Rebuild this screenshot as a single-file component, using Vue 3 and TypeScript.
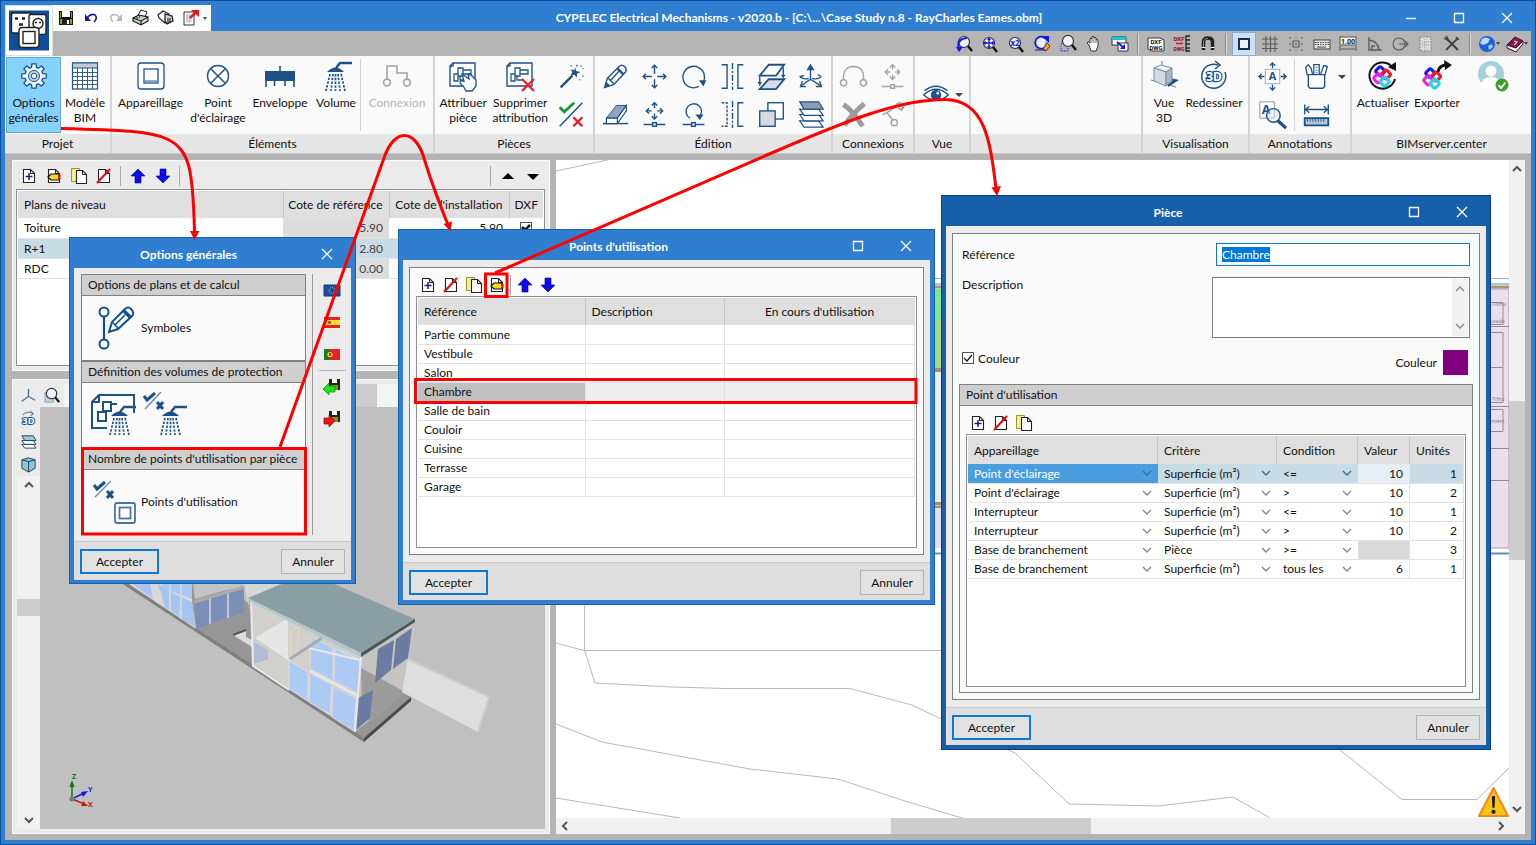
<script setup lang="ts">
import { onMounted, ref } from 'vue'

const N = '#1d5288'
const L = `fill="none" stroke="${N}" stroke-width="1.5"`
const G = 'fill="none" stroke="#a3a3a3" stroke-width="1.6"'
const D = 'fill="none" stroke="#5c5c5c" stroke-width="1.1"'

function gearPath(): string {
  const points: string[] = []
  for (let i = 0; i < 8; i++) {
    const base = (i * Math.PI) / 4
    const steps: [number, number][] = [[-0.27, 9], [-0.17, 12.4], [0.17, 12.4], [0.27, 9]]
    for (const [da, r] of steps) {
      points.push(`${(16 + r * Math.sin(base + da)).toFixed(1)} ${(16 - r * Math.cos(base + da)).toFixed(1)}`)
    }
  }
  return `M${points.join('L')}Z`
}

const moveArrows = (s: string, cy: number, r: number) =>
  `<g fill="none" stroke="${s}" stroke-width="1.6"><path d="M16 ${cy - 3}V${cy - r}M16 ${cy + 3}V${cy + r}M13 ${cy}H${16 - r}M19 ${cy}H${16 + r}"/><path d="M13 ${cy - r + 3}L16 ${cy - r}L19 ${cy - r + 3}M13 ${cy + r - 3}L16 ${cy + r}L19 ${cy + r - 3}M${19 - r} ${cy - 3}L${16 - r} ${cy}L${19 - r} ${cy + 3}M${13 + r} ${cy - 3}L${16 + r} ${cy}L${13 + r} ${cy + 3}"/></g>`
const baseNode = (s: string) =>
  `<g fill="none" stroke="${s}" stroke-width="1.6"><path d="M4 27H14M18 27H28"/><rect x="14" y="25" width="4" height="4"/></g>`
const spray = (x: number, y: number) =>
  `<path d="M${x + 10} ${y + 5}L${x + 14} ${y}H${x + 26}" fill="none" stroke="${N}" stroke-width="2.4"/><path d="M${x + 1} ${y + 9}Q${x + 9.5} ${y} ${x + 18} ${y + 9}Z" fill="${N}"/><path d="M${x + 4} ${y + 11}L${x} ${y + 28}M${x + 7} ${y + 11}L${x + 5} ${y + 28}M${x + 9.5} ${y + 11}V${y + 28}M${x + 12} ${y + 11}L${x + 14} ${y + 28}M${x + 15} ${y + 11}L${x + 19} ${y + 28}" stroke="${N}" stroke-width="1.7" stroke-dasharray="2.4 1.4" fill="none"/>`
const lens = (x: number, y: number) =>
  `<circle cx="${x}" cy="${y}" r="5.500" fill="#eef3fb" stroke="#333" stroke-width="1.2"/><path d="M${x + 4} ${y + 4}L${x + 8} ${y + 9}" stroke="#111" stroke-width="2.4"/>`
const planBase = (s: string) =>
  `<path d="M6 3H28V26H3V6Z" fill="#fff" stroke="${s}" stroke-width="1.4"/><path d="M3 6H6V3M11 8H16V16H11ZM7 14H11V21H7ZM16 10H24V14H16M13 16V20H20" fill="none" stroke="${s}" stroke-width="1.3"/>`
const bimLogo =
  '<g fill="none" stroke-width="2.4" transform="translate(-4.600 -2.800) scale(1.300)"><rect x="11" y="8" width="5.500" height="5.500" rx="1.500" transform="rotate(45 13.700 10.700)" stroke="#1a1af0"/><rect x="15.500" y="10.500" width="5.500" height="5.500" rx="1.500" transform="rotate(45 18.200 13.200)" stroke="#ee1c2a"/><rect x="9.500" y="13.500" width="5.500" height="5.500" rx="1.500" transform="rotate(45 12.200 16.200)" stroke="#f21ee8"/><rect x="14.500" y="16" width="5.500" height="5.500" rx="1.500" transform="rotate(45 17.200 18.700)" stroke="#25d6e6"/></g>'
const disk = (x: number, y: number) =>
  `<path d="M${x} ${y}H${x + 11}V${y + 11}H${x}Z" fill="#26260a"/><path d="M${x + 3} ${y}H${x + 8}V${y + 4}H${x + 3}Z" fill="#fff"/><path d="M${x + 2} ${y + 6}H${x + 9}V${y + 11}H${x + 2}Z" fill="#8b8b28"/>`
const pageShape = '<path d="M3.500 2.500H10.500L14.500 6.500V15.500H3.500Z" fill="#fff" stroke="#222" stroke-width="1.100"/><path d="M10.500 2.500V6.500H14.500" fill="none" stroke="#222"/>'

const icons: Record<string, string> = {
  gear: `<path d="${gearPath()}" fill="#eef6fc" stroke="${N}" stroke-width="1.3" stroke-linejoin="round"/><circle cx="16" cy="16" r="5.500" fill="#b9ddf5" stroke="${N}"/><circle cx="16" cy="16" r="2.800" fill="#eef6fc" stroke="${N}"/>`,
  grid: `<rect x="3.500" y="3" width="25" height="26" fill="#fff" stroke="${N}" stroke-width="1.2"/><rect x="3.500" y="3" width="25" height="5" fill="#c3cad6" stroke="${N}"/><path d="M4 12.500H28M4 16.500H28M4 20.500H28M4 24.500H28M8.500 8V29M13.500 8V29M18.500 8V29M23.500 8V29" fill="none" stroke="${N}" stroke-width=".9"/>`,
  socket: `<rect x="3" y="3" width="26" height="26" rx="3" fill="#fff" stroke="${N}" stroke-width="1.3"/><rect x="9" y="9" width="14" height="14" fill="#fff" stroke="${N}" stroke-width="1.3"/><path d="M10 21H22" stroke="${N}" stroke-width="1"/>`,
  lamp: `<circle cx="16" cy="16" r="10.500" fill="#fff" stroke="${N}" stroke-width="1.400"/><path d="M8.500 8.500L23.500 23.500M23.500 8.500L8.500 23.500" ${L}/>`,
  enveloppe: `<path d="M1 11H31V21H1Z" fill="${N}"/><path d="M16 6V11M2 20V27M10.500 20V26M21 20V26M30 20V27" stroke="${N}" stroke-width="1.6"/>`,
  shower: spray(6, 3),
  connexion: `<path d="M6 20V6H16V13H26V20" ${G}/><circle cx="6" cy="22.500" r="3.400" ${G}/><circle cx="26" cy="22.500" r="3.400" ${G}/>`,
  planHand: planBase(N) + `<path d="M15 14L22 19L21 14Q24 14 26 17L29 20V26L25 31H19Q17 26 13 23Q13 20 17 21Z" fill="#fff" stroke="${N}" stroke-width="1.3"/>`,
  planX: planBase(N) + '<path d="M18 19L30 31M30 19L18 31" stroke="#e8202c" stroke-width="2.3"/>',
  wand: `<path d="M4 28L17 15" stroke="${N}" stroke-width="2.6"/><path d="M20 6L21 10L26 11L22 13L22 17L19 14L15 15L17 11L15 8L19 9Z" fill="${N}"/><path d="M22 3V5M28 7H29M28 15L29 16M26 4L27 5M15 4L16 5M25 19V20" stroke="${N}" stroke-width="1.4"/>`,
  checkX: `<path d="M3 29L28 3" stroke="${N}" stroke-width="1.6"/><path d="M3 8L8 13L19 3" fill="none" stroke="#119a35" stroke-width="3"/><path d="M18 19L28 29M28 19L18 29" stroke="#e01b2b" stroke-width="2.6"/>`,
  pencil: `<path d="M4 28L7 18L20 5Q23 2 26 5Q29 8 27 11L14 25Z" fill="#fff" stroke="${N}" stroke-width="1.6"/><path d="M4 28L6 22L10 26Z" fill="${N}"/><path d="M18 7L25 14" stroke="${N}" stroke-width="2.6"/><path d="M10 21L20 10M8 18L14 24" ${L}/>`,
  move: moveArrows(N, 16, 12.5),
  rotate: `<path d="M22 27Q16 30 10 27A12 12 0 1 1 27 22" ${L}/><path d="M22 20H30L27 27Z" fill="${N}"/>`,
  mirror: `<path d="M4 3H10V29H4M28 3H22V29H28" ${L}/><path d="M16 1V31" ${L} stroke-dasharray="7 2 2 2"/>`,
  copyPlane: `<path d="M3 15L13 3H30L21 15Z" fill="#fff" stroke="${N}" stroke-width="2"/><path d="M3 30L13 19H30L21 30Z" fill="#d5dae3" stroke="${N}" stroke-width="2"/><path d="M29 6V17M3 16V26" ${L}/><path d="M26.500 14H31.500L29 18ZM.500 22H5.500L3 26Z" fill="${N}"/>`,
  axes3: `<path d="M16 19V6M16 19L6 26M16 19L27 26" ${L}/><path d="M11.500 9L16 2L20.500 9Z" fill="${N}"/><path d="M11 27L5 27L7 21M22 27L28 27L26 21M4 16L9 15M4 16Q9 20 14 18M28 16Q23 20 18 18M28 16L24 14" ${L}/>`,
  eraser: `<path d="M2 26H30" stroke="${N}" stroke-width="1.6"/><path d="M6 20L17 6H28L18 20Z" fill="#8ea4bf" stroke="${N}"/><path d="M6 20H18V26H6ZM18 20L28 6V12L18 26" fill="#fff" stroke="${N}" stroke-width="1.3"/>`,
  moveBase: moveArrows(N, 12, 9) + baseNode(N),
  rotateBase: `<path d="M12 20A8.500 8.500 0 1 1 22 19" ${L}/><path d="M18 16H27L23 22Z" fill="${N}"/>` + baseNode(N),
  mirrorCopy: `<path d="M4 3H10V29H4" ${L} stroke-dasharray="3 1.500"/><path d="M28 3H22V29H28" ${L}/><path d="M16 1V31" ${L} stroke-dasharray="7 2 2 2"/>`,
  copies: `<rect x="12" y="3" width="17" height="18" fill="#fff" stroke="${N}" stroke-width="1.500"/><rect x="3" y="12" width="17" height="17" fill="#d5dae3" stroke="${N}" stroke-width="1.500"/>`,
  layers: `<g stroke="${N}" stroke-width="1.300" fill="#fff"><path d="M4 23L9 30H30L25 23Z"/><path d="M4 16L9 23H30L25 16Z"/><path d="M4 10L9 17H30L25 10Z"/><path d="M4 2L9 10H30L25 2Z" fill="#8c9db4"/></g>`,
  arcG: `<path d="M5 20Q4 5 16 5Q28 5 27 20" ${G}/><circle cx="5" cy="23" r="3.400" ${G}/><circle cx="27" cy="23" r="3.400" ${G}/>`,
  moveG: moveArrows('#a3a3a3', 11, 8) + baseNode('#a3a3a3'),
  crossG: '<path d="M5 5Q16 12 26 29M28 4Q14 16 6 28" stroke="#9c9c9c" stroke-width="5.500" fill="none"/>',
  nodeG: `<path d="M5 16L10 14L17 23M10 14L22 6" ${G}/><circle cx="18" cy="25" r="3.400" ${G}/><path d="M20 5Q24 1 27 5Q28 8 26 10M22 9L26 11L29 7" ${G}/>`,
  eye: `<path d="M2 16Q16 3 30 16Q16 28 2 16Z" fill="#fff" stroke="${N}" stroke-width="1.6"/><circle cx="16" cy="16" r="6" fill="${N}"/><circle cx="18" cy="14" r="1.600" fill="#fff"/><path d="M3 11Q16 1 29 11" ${L}/>`,
  cube: `<path d="M14 1V8M3 20L28 27" stroke="#6b7b90"/><path d="M18 17L31 20L20 27Z" fill="${N}"/><path d="M6 8L13 5L24 8L18 12Z" fill="#eef1f5" stroke="#7d8ca0"/><path d="M6 8L18 12V26L6 21Z" fill="#d3dae4" stroke="#7d8ca0"/><path d="M18 12L24 8V21L18 26Z" fill="#aab6c6" stroke="#7d8ca0"/>`,
  redraw: `<path d="M20 5A12 12 0 1 0 27 12M17 1L22 5L17 9" ${L}/><text x="16" y="21" text-anchor="middle" font-family="Open Sans, sans-serif" font-size="12" font-weight="700" fill="#fff" stroke="${N}" stroke-width="2.4" paint-order="stroke">3D</text>`,
  annoMove: `<rect x="8" y="8" width="16" height="16" fill="#fff" stroke="#8ba5c4"/><path d="M16 7V1M16 25V31M7 16H1M25 16H31M13 4L16 1L19 4M13 28L16 31L19 28M4 13L1 16L4 19M28 13L31 16L28 19" ${L}/><text x="16" y="20" text-anchor="middle" font-family="Open Sans, sans-serif" font-size="12" font-weight="700" fill="${N}">A</text>`,
  annoFind: `<path d="M2 2H18V20H2Z" fill="#fff" stroke="#6d8db3"/><text x="9" y="15" text-anchor="middle" font-family="Open Sans, sans-serif" font-size="14" font-weight="700" fill="${N}">A</text><circle cx="17" cy="17" r="7.500" fill="#dfe7f0" fill-opacity=".5" stroke="${N}" stroke-width="1.6"/><path d="M22 23L31 31" stroke="${N}" stroke-width="3.600"/>`,
  penCup: `<path d="M6 15L4 6L7 3L10 7L12 15M13 15V3H19V15M20 15L24 4L28 5L25 15" fill="#fff" stroke="${N}" stroke-width="1.400"/><path d="M7 14H25V27L23 29H9L7 27Z" fill="#fff" stroke="${N}" stroke-width="1.500"/><path d="M15 6H17M15 9H17M15 12H17" stroke="${N}"/>`,
  ruler: `<path d="M3 5V16M29 5V16M4 10.500H28M8 7L4 10.500L8 14M24 7L28 10.500L24 14" ${L}/><rect x="3" y="20" width="26" height="8" fill="#b9c6d8" stroke="${N}" stroke-width="2"/><path d="M6 21V24M9 21V24M12 21V24M15 21V24M18 21V24M21 21V24M24 21V24" stroke="${N}"/>`,
  bimSync: `<path d="M26 8A13 13 0 1 0 28 19" fill="none" stroke="#111" stroke-width="2"/><path d="M21 7L29 2V11Z" fill="#111"/>` + bimLogo,
  bimExport: `<g transform="translate(-4 2)">${bimLogo}</g><path d="M17 12Q18 5 26 5" fill="none" stroke="#111" stroke-width="2.800"/><path d="M23 0L31 5L24 10Z" fill="#111"/>`,
  user: '<circle cx="14" cy="14" r="13" fill="#a6cfdd"/><circle cx="14" cy="11" r="5.500" fill="#fff"/><path d="M3 26Q5 17 14 17Q23 17 25 26Q14 32 3 26Z" fill="#fff"/><circle cx="25" cy="25" r="6.500" fill="#3a9e2d"/><path d="M21.500 25L24 28L28.500 22.500" fill="none" stroke="#fff" stroke-width="1.800"/>',
  diskSave: '<path d="M2 2H16V16H2Z" fill="#111"/><path d="M5 2H13V8H5Z" fill="#fff"/><path d="M3 3H4V9H3ZM14 3H15V9H14ZM3 10H15V15H3Z" fill="#9a9a1e"/><path d="M5 10H13V16H5Z" fill="#222"/><path d="M10 11H12V15H10Z" fill="#fff"/>',
  undo: '<path d="M5 9Q9 4 13 6Q16 9 12 13" fill="none" stroke="#1c1c9c" stroke-width="1.600"/><path d="M3 5V12H9Z" fill="#1c1c9c"/>',
  redo: '<path d="M13 9Q9 4 5 6Q2 9 6 13" fill="none" stroke="#b5b5b5" stroke-width="1.500"/><path d="M15 5V12H9Z" fill="#b5b5b5"/>',
  printer: '<path d="M5 8L9 1L15 3L13 8Z" fill="#fff" stroke="#222"/><path d="M1 9L7 6L16 8V12L9 16L1 12Z" fill="#c9c9c0" stroke="#111" stroke-width="1.100"/><path d="M1 9L9 12L16 8M9 12V16" fill="none" stroke="#111"/><path d="M4 9H6" stroke="#1db31d" stroke-width="2"/><path d="M7 8H8" stroke="#d22" stroke-width="2"/><path d="M11 13L14 11" stroke="#eee"/>',
  setup: '<path d="M1 6L6 2L12 5L8 14L2 9Z" fill="#fff" stroke="#222" stroke-width="1.200"/><path d="M8 5L15 7L16 12L10 15L8 12Z" fill="#d7d7cd" stroke="#111" stroke-width="1.200"/><path d="M11 9V15M13 9V14" stroke="#111"/><path d="M13 7H14" stroke="#d22"/>',
  exportDoc: '<path d="M2 3H12V16H2Z" fill="#fff" stroke="#333"/><path d="M4 6H10M4 8H10M4 10H10M4 12H10M5 5V14M7.500 5V14" stroke="#bbb"/><path d="M8 9L13 4" stroke="#e11" stroke-width="2.400"/><path d="M9 1H17V8Z" fill="#e11"/>',
  zPrev: lens(9, 7) + '<path d="M4 14Q1 4 12 3" fill="none" stroke="#1616e8" stroke-width="2.200"/><path d="M1 12H8L4 17Z" fill="#1616e8"/>',
  zAll: lens(8, 8) + '<path d="M8 4V12M4 8H12" stroke="#1616e8" stroke-width="1.300"/><path d="M8 2L10 5H6ZM8 14L10 11H6ZM2 8L5 6V10ZM14 8L11 6V10Z" fill="#1616e8"/>',
  z2: lens(8, 8) + '<text x="8" y="11" text-anchor="middle" font-family="Open Sans, sans-serif" font-size="8" font-weight="700" fill="#1616e8">x2</text>',
  redrawS: '<path d="M13 4A6 6 0 1 0 11 13" fill="#e9eefc" stroke="#1616e8" stroke-width="1.800"/><path d="M9 1H16V8Z" fill="#1616e8"/><path d="M10 14L14 8L17 11L13 16Z" fill="#d8b325" stroke="#7a1c10"/><path d="M2 15H12" stroke="#222"/>',
  zWin: '<path d="M2 8H9V16H2Z" fill="none" stroke="#1616e8" stroke-dasharray="1 1"/>' + lens(9, 6),
  hand: '<path d="M4 10L2 8Q3 6 5 8V4Q6 2 7 4V2Q8 0 9 2V3Q10 1 11 3V5Q13 3 13 6V11L11 16H6Z" fill="#fff" stroke="#333"/><path d="M7 4V8M9 3V8M11 5V8" stroke="#777"/>',
  winSwap: '<path d="M1 2H15V10H1Z" fill="#fff" stroke="#333"/><path d="M1 2H15V5H1Z" fill="#17c6d8"/><path d="M7 8H17V16H7Z" fill="#fff" stroke="#333"/><path d="M6 7L13 13" stroke="#1616e8" stroke-width="1.800"/><path d="M14 9V14H9Z" fill="#1616e8"/>',
  dxf: '<path d="M1 3H13L17 5V16H4L1 14Z" fill="#fff" stroke="#333"/><text x="9" y="9" text-anchor="middle" font-family="Roboto, sans-serif" font-size="6" font-weight="700" fill="#111">DXF</text><text x="9" y="15" text-anchor="middle" font-family="Roboto, sans-serif" font-size="6" font-weight="700" fill="#111">DWG</text>',
  dxf2: '<text x="6" y="6" text-anchor="middle" font-family="Roboto, sans-serif" font-size="6" font-weight="700" fill="#8d1515">DXF</text><text x="6" y="16" text-anchor="middle" font-family="Roboto, sans-serif" font-size="5" font-weight="700" fill="#8d1515">DWG</text><path d="M3 8.500H10" stroke="#e11" stroke-width="1.500"/><path d="M17 1H13V16H17M13 5H17M13 9H17M13 13H17" fill="none" stroke="#222" stroke-width="1.300"/>',
  magnet: '<path d="M4.500 15V7Q4.500 3 9 3Q13.500 3 13.500 7V15" fill="none" stroke="#222" stroke-width="3.600"/><path d="M4.500 13V7Q4.500 3.500 9 3.500" fill="none" stroke="#888" stroke-width="1"/><path d="M2.500 12.500H6.500M11.500 12.500H15.500" stroke="#fff" stroke-width="1"/>',
  rect: '<rect x="4" y="4" width="10" height="10" fill="#eaf2fd" stroke="#14305a" stroke-width="2"/>',
  hash: `<path d="M5 1V17M9.500 1V17M14 1V17M1 4H17M1 9H17M1 13.500H17" ${D}/>`,
  snap: `<path d="M6 6H12V12H6Z" ${D}/><path d="M2 3H4M2 9H4M2 15H4M14 3H16M14 9H16M14 15H16M9 2V3M9 15V16M9 8V10" ${D}/>`,
  keyboard: '<rect x="1" y="5" width="16" height="9" fill="#e5e5e5" stroke="#444"/><path d="M2 7.500H16M2 9.500H16" stroke="#444" stroke-dasharray="1.500 1"/><path d="M4 12H13" stroke="#444"/>',
  dim: `<rect x="1" y="2" width="16" height="8" fill="#eee" stroke="#555"/><text x="9" y="9" text-anchor="middle" font-family="Roboto, sans-serif" font-size="7" font-weight="700" fill="#222">1.00</text><path d="M1 11V16M17 11V16M2 14H16" ${D}/>`,
  angle: '<path d="M4 2V15H17M4 5Q13 6 14 15M7 15V11H10" fill="none" stroke="#5c5c5c" stroke-width="1.400"/>',
  circleR: `<circle cx="8" cy="9" r="6" ${D}/><path d="M8 9H17M14 6L17 9L14 12" ${D}/>`,
  pageDots: '<path d="M3 2H14V16H3Z" fill="#dadada" stroke="#888" stroke-dasharray="2 1"/><path d="M5 7H13M5 10H13M8 4V15" stroke="#999" stroke-dasharray="1 1"/>',
  tools: '<path d="M3 3L15 15" stroke="#444" stroke-width="2.200"/><path d="M15 3L3 15" stroke="#444" stroke-width="1.800"/><path d="M1 3L4 5M3 1L5 4M13 2L16 5" stroke="#444" stroke-width="1.500"/>',
  globe: '<circle cx="9" cy="9" r="8" fill="#1c62d6"/><path d="M4 4Q8 1 12 4L10 8L5 10L2 8Z" fill="#b8dcff"/><path d="M10 11L14 9L15 12L11 15Z" fill="#9bcbff"/>',
  book: '<path d="M1 10L9 2L17 6L10 13Z" fill="#7c1b62" stroke="#3b0b33"/><path d="M1 10V13L10 17L17 9V6L10 13Z" fill="#f0e9ee" stroke="#3b0b33"/><path d="M8 6L11 7L8 10" fill="none" stroke="#f0d44a" stroke-width="1.300"/>',
  add: pageShape + '<path d="M9 6V13M5.500 9.500H12.500" stroke="#1b1b8e" stroke-width="1.500"/>',
  edit: pageShape + '<path d="M3 10L6 7H14V13H6Z" fill="#f3e11c" stroke="#111" stroke-width="1.200"/><path d="M13 7.500H15.500V12.500H13Z" fill="#e11"/>',
  copy: '<path d="M1.500 1.500H9.500V14.500H1.500Z" fill="#f7f08a" stroke="#99923a"/><path d="M6.500 3.500H12.500L16.500 7.500V16.500H6.500Z" fill="#fff" stroke="#222" stroke-width="1.100"/><path d="M12.500 3.500V7.500H16.500" fill="none" stroke="#222"/>',
  del: pageShape + '<path d="M2 16L15 2" stroke="#e01414" stroke-width="2.200"/>',
  up: '<path d="M9 2L16 9H12V16H6V9H2Z" fill="#0c0cf2" stroke="#00007c" stroke-width=".6"/>',
  down: '<path d="M9 16L16 9H12V2H6V9H2Z" fill="#0c0cf2" stroke="#00007c" stroke-width=".6"/>',
  flagEu: '<path d="M1 4H17V15H1Z" fill="#1c4f9c" stroke="#123a78"/><circle cx="9" cy="9.500" r="3" fill="none" stroke="#e8e070" stroke-width="1" stroke-dasharray="1 1.300"/>',
  flagEs: '<path d="M1 4H17V15H1Z" fill="#e3232c"/><path d="M1 7H17V12H1Z" fill="#fbe32a"/><path d="M5 8H8V11H5Z" fill="#c5582a"/>',
  flagPt: '<path d="M1 4H17V15H1Z" fill="#e3232c"/><path d="M1 4H7V15H1Z" fill="#1b7a2c"/><circle cx="7" cy="9.500" r="2.600" fill="#f4d72c"/><path d="M6 8H8V11H6Z" fill="#d22"/>',
  importD: disk(6, 1) + '<path d="M0 11L6 5V8H12V14H6V17Z" fill="#1fe01f" stroke="#0a8a0a" stroke-width=".7"/>',
  exportD: disk(6, 1) + '<path d="M12 11L6 5V8H1V14H6V17Z" fill="#f01414" stroke="#8a0a0a" stroke-width=".7"/>',
  axis: '<path d="M9 2V10L2 15M9 10L16 14" fill="none" stroke="#4c6a80" stroke-width="1.300"/>',
  zoomS: '<path d="M1 6H10V16H1Z" fill="#bcd3df" stroke="#8aa7b8"/>' + lens(8, 7),
  d3: `<path d="M3 5Q9 0 14 4M11 1L14 4L11 6" fill="none" stroke="#2d5f85"/><text x="9" y="15" text-anchor="middle" font-family="Open Sans, sans-serif" font-size="10" font-weight="700" fill="#fff" stroke="${N}" stroke-width="2" paint-order="stroke">3D</text>`,
  layersS: '<g stroke="#26424f" fill="#fff"><path d="M2 12L5 16H17L14 12Z"/><path d="M2 8L5 12H17L14 8Z"/><path d="M2 3L5 8H17L14 3Z" fill="#9cc9dc"/></g>',
  cubeS: '<path d="M2 4L9 2L16 4V13L9 17L2 13Z" fill="#8cc4de" stroke="#233f4c"/><path d="M2 4L9 6L16 4M9 6V17" fill="none" stroke="#233f4c"/>',
  symbols: `<path d="M12 11V33" stroke="#10518c" stroke-width="2.200"/><circle cx="12" cy="6" r="4.500" fill="#fff" stroke="#10518c" stroke-width="2"/><circle cx="12" cy="38" r="4.500" fill="#fff" stroke="#10518c" stroke-width="2"/><path d="M17 26L20 16L33 3Q36 0 39 3Q43 7 40 10L26 23Z" fill="#fff" stroke="#10518c" stroke-width="2"/><path d="M31 4L39 12" stroke="#10518c" stroke-width="3.500"/><path d="M23 19L33 9M20 16L26 22" stroke="#10518c" stroke-width="1.600"/>`,
  volPlan: `<path d="M8 3H43V36H1V10Z" fill="#fff" stroke="${N}" stroke-width="2"/><path d="M1 10H8V3M12 10H20V19H12ZM7 20H15V29H7ZM20 12H26" fill="none" stroke="${N}" stroke-width="2"/><path d="M16 21H45V45H16Z" fill="#fafafa"/>` + `<g transform="translate(17 13)">${spray(2, 2)}</g>`,
  volCheck: `<path d="M2 17L18 0" stroke="#6d8db3" stroke-width="1.500"/><path d="M1 4L4 8L12 1" fill="none" stroke="${N}" stroke-width="3"/><path d="M14 10L20 17M20 10L14 17" stroke="${N}" stroke-width="3"/>` + spray(18, 15),
  points: `<path d="M3 17L19 1" stroke="#6d8db3" stroke-width="1.500"/><path d="M2 5L5 9L13 2" fill="none" stroke="${N}" stroke-width="3"/><path d="M15 11L21 18M21 11L15 18" stroke="${N}" stroke-width="3"/><rect x="23" y="23" width="20" height="20" rx="2" fill="#fff" stroke="#4a74a2" stroke-width="1.800"/><rect x="27.500" y="27.500" width="11" height="11" fill="#fff" stroke="#4a74a2" stroke-width="1.800"/>`,
  warn: '<path d="M15 2L29 29H1Z" fill="#fbc313" stroke="#f08a1c" stroke-width="2" stroke-linejoin="round"/><path d="M13.500 10H16.500L16 21H14Z" fill="#111"/><circle cx="15" cy="25" r="2" fill="#111"/>',
  app: '<rect width="40" height="40" fill="#0f4f9a"/><g fill="#fff" stroke="#222" stroke-width="1.400"><rect x="2.500" y="2.500" width="20" height="20" rx="2"/><rect x="20" y="4" width="17" height="20" rx="2"/><circle cx="29" cy="13" r="5"/><rect x="10" y="17" width="20" height="20" rx="3"/><rect x="14" y="21" width="12" height="12"/></g><path d="M6 8H9M13 8H16M10 14H14" stroke="#222" stroke-width="2.400"/><path d="M26 12H28M30 12H32" stroke="#222" stroke-width="1.600"/>',
}

const quick = ['diskSave', 'undo', 'redo', 'printer', 'setup', 'exportDoc']
const viewTools: string[][] = [
  ['zPrev', 'zAll', 'z2', 'redrawS', 'zWin', 'hand', 'winSwap'],
  ['dxf', 'dxf2', 'magnet'],
  ['rect', 'hash', 'snap', 'keyboard', 'dim', 'angle', 'circleR', 'pageDots', 'tools'],
]
const editTools = ['pencil', 'move', 'rotate', 'mirror', 'copyPlane', 'axes3', 'eraser', 'moveBase', 'rotateBase', 'mirrorCopy', 'copies', 'layers']
const linkTools = ['arcG', 'moveG', 'crossG', 'nodeG']

const levels = [
  { name: 'Toiture', refLevel: '5.90', inst: '5.90' },
  { name: 'R+1', refLevel: '2.80', inst: '2.80' },
  { name: 'RDC', refLevel: '0.00', inst: '0.00' },
]
const rooms = ['Partie commune', 'Vestibule', 'Salon', 'Chambre', 'Salle de bain', 'Couloir', 'Cuisine', 'Terrasse', 'Garage']
const rules = [
  { device: "Point d'éclairage", crit: 'Superficie (m²)', cond: '<=', value: '10', units: '1' },
  { device: "Point d'éclairage", crit: 'Superficie (m²)', cond: '>', value: '10', units: '2' },
  { device: 'Interrupteur', crit: 'Superficie (m²)', cond: '<=', value: '10', units: '1' },
  { device: 'Interrupteur', crit: 'Superficie (m²)', cond: '>', value: '10', units: '2' },
  { device: 'Base de branchement', crit: 'Pièce', cond: '>=', value: '', units: '3' },
  { device: 'Base de branchement', crit: 'Superficie (m²)', cond: 'tous les', value: '6', units: '1' },
]

const reference = ref('Chambre')
const description = ref('')
const refInput = ref<HTMLInputElement | null>(null)
onMounted(() => {
  refInput.value?.focus()
  refInput.value?.select()
})
</script>

<template>
  <div class="window">
    <header class="top">
      <div class="app-icon"><svg viewBox="0 0 40 40" v-html="icons.app" /></div>
      <div class="titlebar">
        <div class="quick">
          <button v-for="q in quick" :key="q" type="button" :aria-label="q"><svg viewBox="0 0 18 18" v-html="icons[q]" /></button>
          <i class="caret small" />
        </div>
        <h1>CYPELEC Electrical Mechanisms - v2020.b - [C:\...\Case Study n.8 - RayCharles Eames.obm]</h1>
        <div class="win-btns">
          <button type="button" aria-label="Réduire"><svg viewBox="0 0 12 12"><path d="M1 6.500H11" /></svg></button>
          <button type="button" aria-label="Agrandir"><svg viewBox="0 0 12 12"><path d="M1.500 1.500H10.500V10.500H1.500Z" /></svg></button>
          <button type="button" aria-label="Fermer"><svg viewBox="0 0 12 12"><path d="M1 1L11 11M11 1L1 11" /></svg></button>
        </div>
      </div>
      <div class="view-tools">
        <template v-for="(group, gi) in viewTools" :key="gi">
          <button v-for="t in group" :key="t" type="button" :class="{ on: t === 'rect' }" :aria-label="t"><svg viewBox="0 0 18 18" v-html="icons[t]" /></button>
          <i class="vsep" />
        </template>
        <button class="drop" type="button" aria-label="Internet"><svg viewBox="0 0 18 18" v-html="icons.globe" /><i class="caret small" /></button>
        <button class="drop" type="button" aria-label="Aide"><svg viewBox="0 0 18 18" v-html="icons.book" /><i class="caret small" /></button>
      </div>
    </header>

    <nav class="ribbon">
      <section class="g-projet">
        <div class="body">
          <button class="big w55 active" type="button"><svg viewBox="0 0 32 32" v-html="icons.gear" />Options<br />générales</button>
          <button class="big w48" type="button"><svg viewBox="0 0 32 32" v-html="icons.grid" />Modèle<br />BIM</button>
        </div>
        <h2>Projet</h2>
      </section>
      <section class="g-elements">
        <div class="body">
          <button class="big w76" type="button"><svg viewBox="0 0 32 32" v-html="icons.socket" />Appareillage</button>
          <button class="big w60" type="button"><svg viewBox="0 0 32 32" v-html="icons.lamp" />Point<br />d'éclairage</button>
          <button class="big w64" type="button"><svg viewBox="0 0 32 32" v-html="icons.enveloppe" />Enveloppe</button>
          <button class="big w48" type="button"><svg viewBox="0 0 32 32" v-html="icons.shower" />Volume</button>
          <i class="rsep" />
          <button class="big w70" type="button" disabled><svg viewBox="0 0 32 32" v-html="icons.connexion" />Connexion</button>
        </div>
        <h2>Éléments</h2>
      </section>
      <section class="g-pieces">
        <div class="body">
          <button class="big w55" type="button"><svg viewBox="0 0 32 32" v-html="icons.planHand" />Attribuer<br />pièce</button>
          <button class="big w60" type="button"><svg viewBox="0 0 32 32" v-html="icons.planX" />Supprimer<br />attribution</button>
          <div class="tiles cols1">
            <button type="button" aria-label="Assistant"><svg viewBox="0 0 32 32" v-html="icons.wand" /></button>
            <button type="button" aria-label="Vérifier"><svg viewBox="0 0 32 32" v-html="icons.checkX" /></button>
          </div>
        </div>
        <h2>Pièces</h2>
      </section>
      <section class="g-edition">
        <div class="body">
          <div class="tiles cols6">
            <button v-for="t in editTools" :key="t" type="button" :aria-label="t"><svg viewBox="0 0 32 32" v-html="icons[t]" /></button>
          </div>
        </div>
        <h2>Édition</h2>
      </section>
      <section class="g-connexions">
        <div class="body">
          <div class="tiles cols2">
            <button v-for="t in linkTools" :key="t" type="button" disabled :aria-label="t"><svg viewBox="0 0 32 32" v-html="icons[t]" /></button>
          </div>
        </div>
        <h2>Connexions</h2>
      </section>
      <section class="g-vue">
        <div class="body">
          <button class="eye" type="button" aria-label="Vue"><svg viewBox="0 0 32 32" v-html="icons.eye" /><i class="caret" /></button>
        </div>
        <h2>Vue</h2>
      </section>
      <section class="g-blank"><div class="body" /><h2></h2></section>
      <section class="g-visual">
        <div class="body">
          <button class="big w40" type="button"><svg viewBox="0 0 32 32" v-html="icons.cube" />Vue<br />3D</button>
          <button class="big w60" type="button"><svg viewBox="0 0 32 32" v-html="icons.redraw" />Redessiner</button>
        </div>
        <h2>Visualisation</h2>
      </section>
      <section class="g-annot">
        <div class="body">
          <div class="tiles cols1">
            <button type="button" aria-label="Déplacer le texte"><svg viewBox="0 0 32 32" v-html="icons.annoMove" /></button>
            <button type="button" aria-label="Chercher le texte"><svg viewBox="0 0 32 32" v-html="icons.annoFind" /></button>
          </div>
          <i class="rsep" />
          <div class="tiles cols1">
            <button type="button" aria-label="Dessin"><svg viewBox="0 0 32 32" v-html="icons.penCup" /></button>
            <button type="button" aria-label="Mesurer"><svg viewBox="0 0 32 32" v-html="icons.ruler" /></button>
          </div>
          <i class="caret annot-caret" />
        </div>
        <h2>Annotations</h2>
      </section>
      <section class="g-bim">
        <div class="body">
          <button class="big w60" type="button"><svg viewBox="0 0 32 32" v-html="icons.bimSync" />Actualiser</button>
          <button class="big w48" type="button"><svg viewBox="0 0 32 32" v-html="icons.bimExport" />Exporter</button>
          <button class="big w64" type="button" aria-label="Utilisateur"><svg viewBox="0 0 32 32" v-html="icons.user" /></button>
        </div>
        <h2>BIMserver.center</h2>
      </section>
    </nav>

    <main class="work">
      <div class="left">
        <section class="panel levels">
          <div class="levels-tools">
            <button type="button" aria-label="Ajouter"><svg viewBox="0 0 18 18" v-html="icons.add" /></button>
            <button type="button" aria-label="Éditer"><svg viewBox="0 0 18 18" v-html="icons.edit" /></button>
            <button type="button" aria-label="Copier"><svg viewBox="0 0 18 18" v-html="icons.copy" /></button>
            <button type="button" aria-label="Effacer"><svg viewBox="0 0 18 18" v-html="icons.del" /></button>
            <i class="tsep" />
            <button type="button" aria-label="Monter"><svg viewBox="0 0 18 18" v-html="icons.up" /></button>
            <button type="button" aria-label="Descendre"><svg viewBox="0 0 18 18" v-html="icons.down" /></button>
            <i class="tsep" />
            <span class="grow" />
            <i class="tsep" />
            <button type="button" aria-label="Précédent"><svg viewBox="0 0 18 18"><path d="M3 12L9 6L15 12Z" /></svg></button>
            <button type="button" aria-label="Suivant"><svg viewBox="0 0 18 18"><path d="M3 7L9 13L15 7Z" /></svg></button>
          </div>
          <div class="table-box">
            <table class="levels-table">
              <colgroup><col /><col class="c106" /><col class="c120" /><col class="c34" /></colgroup>
              <thead><tr><th>Plans de niveau</th><th class="r">Cote de référence</th><th class="r">Cote de l'installation</th><th class="c">DXF</th></tr></thead>
              <tbody>
                <tr v-for="(l, i) in levels" :key="l.name" :class="{ sel: i === 1 }">
                  <td>{{ l.name }}</td>
                  <td class="r dim">{{ l.refLevel }}</td>
                  <td class="r">{{ l.inst }}</td>
                  <td class="c"><label class="chk"><input type="checkbox" checked :aria-label="'DXF ' + l.name" /><svg viewBox="0 0 12 12"><path d="M2 5L5 8L10 3" stroke-width="2.500" /></svg></label></td>
                </tr>
              </tbody>
            </table>
          </div>
        </section>

        <section class="panel view3d">
          <div class="side">
            <button type="button" aria-label="Axes"><svg viewBox="0 0 18 18" v-html="icons.axis" /></button>
            <button type="button" aria-label="3D"><svg viewBox="0 0 18 18" v-html="icons.d3" /></button>
            <button type="button" aria-label="Calques"><svg viewBox="0 0 18 18" v-html="icons.layersS" /></button>
            <button type="button" aria-label="Volume"><svg viewBox="0 0 18 18" v-html="icons.cubeS" /></button>
            <div class="vscroll">
              <svg viewBox="0 0 10 10"><path d="M1 7L5 3L9 7" /></svg>
              <i class="thumb" />
              <svg viewBox="0 0 10 10"><path d="M1 3L5 7L9 3" /></svg>
            </div>
          </div>
          <div class="scene-col">
            <div class="scene-tools"><button type="button" aria-label="Zoom"><svg viewBox="0 0 18 18" v-html="icons.zoomS" /></button><span class="hthumb" /></div>
            <svg class="scene" aria-label="Vue 3D du bâtiment">
              <g transform="translate(-40 -407)">
                <path d="M115 575L127 583L364 742L411 697L300 640L244 600L200 570Z" fill="#969696" />
                <path d="M115 575L364 738V742L115 579Z" fill="#7f7f7f" />
                <path d="M364 742L411 701V697L364 738Z" fill="#4c4c4c" />
                <path d="M120 570H192V602L196 629L120 578Z" fill="#d9d9d9" />
                <path d="M130 582L150 582L153 599ZM158 584L175 594L180 617L165 607ZM174 594L192 602L195 627L182 619Z" fill="#a6c4f2" />
                <path d="M162 580H192V599L163 588Z" fill="#a9c7f5" />
                <path d="M193 584H244V585L195 599Z" fill="#c4c4c4" />
                <path d="M195 604L244 588V612L196 629Z" fill="#7a8eb8" />
                <path d="M170 584V611M181 584V619M210 598V624M228 592V618" stroke="#dadada" stroke-width="1.500" />
                <path d="M194 602L244 587" stroke="#aaa" stroke-width="3" />
                <path d="M244 584H280L248 598L250 612Z" fill="#d6d6d6" />
                <path d="M233 635L246 630V637L252 640V647Z" fill="#dcdcdc" />
                <path d="M233 635L246 630" stroke="#555" stroke-width="2" />
                <path d="M251 601L361 657L355 732L253 666Z" fill="#d2d0cc" />
                <path d="M361 657L415 620L405 692L355 732Z" fill="#c5c4c2" />
                <path d="M255 638L288 618V660Z" fill="#e6e6e6" />
                <path d="M254 642L268 650V659L254 664Z" fill="#b1bdd5" />
                <path d="M291 631L299 626L297 655L291 659Z" fill="none" stroke="#e4dcb4" />
                <path d="M361 668L405 692L372 722L362 716Z" fill="#9b9b9b" />
                <g fill="#adcaf5" stroke="#dcdcdc">
                  <path d="M311 637L333 648V681L310 669ZM335 649L360 660L358 693L334 681ZM289 661L308 672V701L289 689ZM310 673L332 685L330 714L309 702ZM333 687L356 698L354 731L332 717Z" />
                </g>
                <path d="M378 649L394 640L391 670L375 683ZM396 639L412 628L408 658L393 669ZM358 698L373 690L370 718L355 731Z" fill="#6b7ca2" />
                <path d="M289 660L309 648L360 660M310 671L358 696M361 657L355 732M251 601L253 666L289 690" fill="none" stroke="#e9e9e9" stroke-width="2" />
                <path d="M290 659L322 638" stroke="#aaa" stroke-width="3" />
                <path d="M248 598L292 580H325L415 619L361 653Z" fill="#8a9fa4" />
                <path d="M248 598L361 653V657L248 601Z" fill="#b4c8cc" />
                <path d="M361 653L415 619V622L361 657Z" fill="#4c5659" />
                <path d="M408 659L489 697L478 732L402 692Z" fill="#dedede" />
                <path d="M408 659L489 697L478 732" fill="none" stroke="#ccc" stroke-width="2" />
                <path d="M72 799V784" stroke="#0a7d12" stroke-width="1.500" /><path d="M69.500 787L72 780L74.500 787Z" fill="#0a7d12" />
                <path d="M72 799L82 794" stroke="#1717e8" stroke-width="1.500" /><path d="M81 792L88 791L83 797Z" fill="#1717e8" />
                <path d="M72 799L82 803" stroke="#c81414" stroke-width="1.500" /><path d="M83 801L88 806L81 806Z" fill="#c81414" />
                <circle cx="72" cy="799" r="2.500" fill="#777" />
                <text x="72" y="779" class="ax" fill="#0a7d12">Z</text><text x="88" y="792" class="ax" fill="#1717e8">Y</text><text x="88" y="807" class="ax" fill="#c81414">X</text>
              </g>
            </svg>
          </div>
        </section>
      </div>

      <div class="plan">
        <div class="plan-main">
          <svg class="plan-lines" aria-label="Plan">
            <g transform="translate(-556 -160)" fill="none" stroke="#b9b9b9">
              <path d="M556 171L612 159" />
              <path d="M556 643L584 650.500H941M584.500 400V650L595 683L672 687L725 688.500H850L912 705L941 719L1015 753L1069 804L1158 806L1233 797L1270 818" />
              <path d="M556 724L602 742L750 769L838 779L905 801L962 818M556 798L680 818M1335 746L1402 799.500H1477L1509 768" />
              <path d="M930 278.500H1509" stroke="#a8a8a8" />
              <path d="M930 284H1509" stroke="#8fd0e6" stroke-width="2" />
              <path d="M930 287H1509" stroke="#b8906c" stroke-width="3" />
              <path d="M930 289H945V368H930Z" fill="#7fe790" stroke="none" />
              <path d="M937 320L945 316V368H937Z" fill="#b5d67c" stroke="none" />
              <path d="M930 370H945" stroke="#b08c6c" stroke-width="4" />
              <path d="M930 372H945V502H930Z" fill="#ebebeb" stroke="none" />
              <path d="M930 503.500H945M930 507H945" stroke="#b08c6c" stroke-width="3" />
              <path d="M930 508H945V548H930Z" fill="#eddcea" stroke="none" />
              <path d="M1485 289H1509V548H1485Z" fill="#ecdeea" stroke="#a89ba7" />
              <path d="M1485 302.500H1503V324.500H1485M1485 326.500H1509M1485 332.500H1503V402.500H1485M1485 367.500H1503M1485 406.500H1509M1485 409.500H1503V431.500H1485M1485 448.500H1509M1485 480.500H1509" stroke="#978a96" />
              <path d="M930 553.500H1509" stroke="#5c93ae" stroke-width="2" />
              <text x="1491" y="306" class="tag">-Tomu</text><text x="1491" y="323" class="tag">utado</text><text x="1491" y="401" class="tag">-Tifno</text><text x="1491" y="423" class="tag">mient</text>
            </g>
          </svg>
          <svg class="warn" viewBox="0 0 30 30" v-html="icons.warn" />
        </div>
        <div class="pscroll-v">
          <svg viewBox="0 0 10 10"><path d="M1 7L5 3L9 7" /></svg><i class="thumb" /><svg viewBox="0 0 10 10"><path d="M1 3L5 7L9 3" /></svg>
        </div>
        <div class="pscroll-h">
          <svg viewBox="0 0 10 10"><path d="M7 1L3 5L7 9" /></svg><i class="thumb" /><svg viewBox="0 0 10 10"><path d="M3 1L7 5L3 9" /></svg>
        </div>
      </div>
    </main>

    <section class="dialog d-options" role="dialog" aria-label="Options générales">
      <header><h3>Options générales</h3><button type="button" aria-label="Fermer"><svg viewBox="0 0 12 12"><path d="M1 1L11 11M11 1L1 11" /></svg></button></header>
      <div class="opt-body">
        <div class="opt-list">
          <div class="opt"><h4>Options de plans et de calcul</h4><button type="button"><svg viewBox="0 0 44 44" v-html="icons.symbols" />Symboles</button></div>
          <div class="opt"><h4>Définition des volumes de protection</h4><div class="opt-pair"><button type="button" aria-label="Volumes sur le plan"><svg viewBox="0 0 46 46" v-html="icons.volPlan" /></button><button type="button" aria-label="Volumes à vérifier"><svg viewBox="0 0 46 46" v-html="icons.volCheck" /></button></div></div>
          <div class="opt"><h4>Nombre de points d'utilisation par pièce</h4><button type="button"><svg viewBox="0 0 44 44" v-html="icons.points" />Points d'utilisation</button></div>
        </div>
        <div class="opt-side">
          <button type="button" aria-label="Europe"><svg viewBox="0 0 18 18" v-html="icons.flagEu" /></button>
          <button type="button" aria-label="Espagne"><svg viewBox="0 0 18 18" v-html="icons.flagEs" /></button>
          <button type="button" aria-label="Portugal"><svg viewBox="0 0 18 18" v-html="icons.flagPt" /></button>
          <i />
          <button type="button" aria-label="Importer"><svg viewBox="0 0 18 18" v-html="icons.importD" /></button>
          <button type="button" aria-label="Exporter"><svg viewBox="0 0 18 18" v-html="icons.exportD" /></button>
        </div>
      </div>
      <footer><button class="ok" type="button">Accepter</button><button type="button">Annuler</button></footer>
    </section>

    <section class="dialog d-points" role="dialog" aria-label="Points d'utilisation">
      <header><h3>Points d'utilisation</h3>
        <button type="button" aria-label="Agrandir"><svg viewBox="0 0 12 12"><path d="M1.500 1.500H10.500V10.500H1.500Z" /></svg></button>
        <button type="button" aria-label="Fermer"><svg viewBox="0 0 12 12"><path d="M1 1L11 11M11 1L1 11" /></svg></button>
      </header>
      <div class="pad">
        <div class="frame">
          <div class="tools">
            <button type="button" aria-label="Ajouter"><svg viewBox="0 0 18 18" v-html="icons.add" /></button>
            <button type="button" aria-label="Effacer"><svg viewBox="0 0 18 18" v-html="icons.del" /></button>
            <button type="button" aria-label="Copier"><svg viewBox="0 0 18 18" v-html="icons.copy" /></button>
            <button type="button" aria-label="Éditer"><svg viewBox="0 0 18 18" v-html="icons.edit" /></button>
            <i class="tsep" />
            <button type="button" aria-label="Monter"><svg viewBox="0 0 18 18" v-html="icons.up" /></button>
            <button type="button" aria-label="Descendre"><svg viewBox="0 0 18 18" v-html="icons.down" /></button>
          </div>
          <div class="table-box">
            <table class="rooms-table">
              <colgroup><col class="c167" /><col class="c139" /><col /></colgroup>
              <thead><tr><th>Référence</th><th>Description</th><th class="c">En cours d'utilisation</th></tr></thead>
              <tbody>
                <tr v-for="r in rooms" :key="r" :class="{ sel: r === 'Chambre' }"><td>{{ r }}</td><td></td><td></td></tr>
              </tbody>
            </table>
          </div>
        </div>
      </div>
      <footer><button class="ok" type="button">Accepter</button><button type="button">Annuler</button></footer>
    </section>

    <section class="dialog d-piece" role="dialog" aria-label="Pièce">
      <header><h3>Pièce</h3>
        <button type="button" aria-label="Agrandir"><svg viewBox="0 0 12 12"><path d="M1.500 1.500H10.500V10.500H1.500Z" /></svg></button>
        <button type="button" aria-label="Fermer"><svg viewBox="0 0 12 12"><path d="M1 1L11 11M11 1L1 11" /></svg></button>
      </header>
      <div class="pad">
        <div class="frame">
          <div class="field f-ref"><label for="p-ref">Référence</label><input id="p-ref" ref="refInput" v-model="reference" type="text" /></div>
          <div class="field f-desc"><label for="p-desc">Description</label>
            <div class="area"><textarea id="p-desc" v-model="description" /><span><svg viewBox="0 0 10 10"><path d="M1 7L5 3L9 7" /></svg><svg viewBox="0 0 10 10"><path d="M1 3L5 7L9 3" /></svg></span></div>
          </div>
          <div class="field f-color">
            <label class="chk-row"><span class="chk"><input type="checkbox" checked /><svg viewBox="0 0 12 12"><path d="M2 6L5 9L10 3" stroke-width="1.200" /></svg></span>Couleur</label>
            <div class="color"><label for="p-col">Couleur</label><button id="p-col" type="button" aria-label="Couleur violette" /></div>
          </div>
          <div class="group">
            <h4>Point d'utilisation</h4>
            <div class="tools">
              <button type="button" aria-label="Ajouter"><svg viewBox="0 0 18 18" v-html="icons.add" /></button>
              <button type="button" aria-label="Effacer"><svg viewBox="0 0 18 18" v-html="icons.del" /></button>
              <button type="button" aria-label="Copier"><svg viewBox="0 0 18 18" v-html="icons.copy" /></button>
            </div>
            <div class="table-box">
              <table class="rules-table">
                <colgroup><col /><col class="c119" /><col class="c81" /><col class="c52" /><col class="c54" /></colgroup>
                <thead><tr><th>Appareillage</th><th>Critère</th><th>Condition</th><th>Valeur</th><th>Unités</th></tr></thead>
                <tbody>
                  <tr v-for="(r, i) in rules" :key="i" :class="{ sel: i === 0 }">
                    <td v-for="(v, k) in [r.device, r.crit, r.cond]" :key="k">
                      <div class="sel-wrap"><select :aria-label="['Appareillage', 'Critère', 'Condition'][k]"><option>{{ v }}</option></select><svg viewBox="0 0 10 10"><path d="M1 3L5 7L9 3" /></svg></div>
                    </td>
                    <td class="r val" :class="{ off: r.value === '' }">{{ r.value }}</td>
                    <td class="r">{{ r.units }}</td>
                  </tr>
                </tbody>
              </table>
            </div>
          </div>
        </div>
      </div>
      <footer><button class="ok" type="button">Accepter</button><button type="button">Annuler</button></footer>
    </section>

    <svg class="callouts" aria-hidden="true">
      <g fill="none" stroke="#ff0000" stroke-width="3">
        <path d="M61 128.500C120 130 150 131 167 139C190 150 193 170 194.500 232" />
        <path d="M280 447L384 158C394 128 415 128 424 158C432 185 443 212 448 225" />
        <path d="M495 273L767 155C850 119 900 99.500 945 99.500C985 100 990 140 996 188" />
        <path d="M82.500 448.500H305.500V534H82.500ZM485.500 274H507V296.500H485.500ZM415.500 379.500H916V402.500H415.500Z" />
      </g>
      <path d="M190 231H199.500L194.500 240ZM443.500 224L452 221.500L450.500 231.500ZM991.500 187.500L1001 186L997 196Z" fill="#ff0000" />
    </svg>
  </div>
</template>

<style>
html,
body {
  margin: 0;
  background: #b4b4b4;
}
</style>

<style scoped>
* {
  box-sizing: border-box;
}
.window {
  position: relative;
  display: flex;
  flex-direction: column;
  min-height: 100vh;
  padding: 4px;
  border: 1px solid #0a4da0;
  background: #2f7ecf;
  font-family: Lato, 'Open Sans', sans-serif;
  font-size: 12px;
  line-height: 15px;
  color: #111;
  overflow: hidden;
}
h1, h2, h3, h4 {
  margin: 0;
  font-size: inherit;
  font-weight: 400;
}
button {
  display: flex;
  align-items: center;
  justify-content: center;
  padding: 0;
  border: 0;
  background: none;
  font: inherit;
  color: inherit;
}
svg {
  flex: none;
  display: block;
}
.caret {
  width: 0;
  height: 0;
  border: 4px solid transparent;
  border-top-color: #444;
  border-bottom-width: 0;
}
.caret.small {
  border-width: 3px 2px 0;
}

/* title bar */
.top {
  flex: none;
  display: grid;
  grid-template-columns: 48px 1fr;
  grid-template-rows: 26px 25px;
}
.app-icon {
  grid-row: 1 / 3;
  background: #fff;
  border: 1px solid #ddd;
  padding: 3px;
}
.app-icon svg {
  width: 100%;
  height: 100%;
}
.titlebar {
  display: flex;
}
.quick {
  display: flex;
  align-items: center;
  width: 158px;
  background: #fdfdfd;
}
.quick button {
  width: 25px;
}
.quick svg,
.view-tools svg {
  width: 18px;
  height: 18px;
}
.titlebar h1 {
  flex: 1;
  text-align: center;
  color: #fff;
  font-weight: 700;
  line-height: 26px;
}
.win-btns {
  display: flex;
}
.win-btns button {
  width: 48px;
}
.win-btns svg,
.dialog > header svg {
  width: 12px;
  height: 12px;
  fill: none;
  stroke: #fff;
  stroke-width: 1.3;
}
.view-tools {
  display: flex;
  justify-content: flex-end;
  align-items: center;
  background: #b4b4b4;
}
.view-tools button {
  width: 26px;
  height: 24px;
}
.view-tools .on {
  width: 24px;
  margin: 0 1px;
  border: 1px solid #8ea9cd;
  background: #cfe0f6;
}
.view-tools .drop {
  width: 28px;
}
.vsep {
  width: 10px;
  height: 20px;
  background: linear-gradient(90deg, transparent 4px, #8b8b8b 4px 5px, #d8d8d8 5px 6px, transparent 6px);
}

/* ribbon */
.ribbon {
  flex: none;
  display: flex;
  height: 98px;
  background: #fafafa;
  border-bottom: 1px solid #c8c8c8;
}
.ribbon section {
  flex: none;
  display: flex;
  flex-direction: column;
  border-right: 2px solid #d5d5d5;
}
.ribbon section:last-child {
  border-right: 0;
}
.ribbon .body {
  flex: 1;
  display: flex;
  padding: 1px 0 1px 1px;
}
.ribbon h2 {
  height: 19px;
  line-height: 19px;
  text-align: center;
  background: #e6e6e6;
}
.g-projet { width: 107px; }
.g-elements { width: 323px; }
.g-pieces { width: 160px; }
.g-edition { width: 238px; }
.g-connexions { width: 82px; }
.g-vue { width: 56px; }
.ribbon .g-blank { flex: 1; }
.g-visual { width: 107px; }
.g-annot { width: 102px; }
.g-bim { width: 179px; }
.big {
  flex-direction: column;
  justify-content: flex-start;
  padding-top: 3px;
  text-align: center;
}
.big svg {
  width: 32px;
  height: 32px;
  margin-bottom: 3px;
}
.big:disabled {
  color: #b5b5b5;
}
.active {
  background: #86d2fc;
  border: 1px solid #62a8cf;
  padding-top: 2px;
}
.w40 { width: 40px; }
.w48 { width: 48px; }
.w55 { width: 55px; }
.w60 { width: 60px; }
.w64 { width: 64px; }
.w70 { width: 72px; }
.w76 { width: 75px; }
.rsep {
  width: 1px;
  margin: 2px 0;
  background: #d5d5d5;
}
.tiles {
  display: grid;
  grid-template-rows: 38px 38px;
}
.tiles svg {
  width: 29px;
  height: 29px;
}
.cols1 { grid-template-columns: 43px; }
.cols2 { grid-template-columns: 39px 39px; }
.cols6 { grid-template-columns: repeat(6, 39px); }
.eye {
  width: 52px;
  gap: 5px;
}
.eye svg {
  width: 28px;
  height: 28px;
}
.annot-caret {
  margin-top: 18px;
}

/* work area */
.work {
  flex: 1;
  display: grid;
  grid-template-columns: 538px 1fr;
  gap: 6px;
  padding: 6px 6px 6px 7px;
  background: #b4b4b4;
}
.left {
  display: flex;
  flex-direction: column;
  gap: 8px;
}
.panel {
  border: 1px solid #fafafa;
  background: #ebebeb;
}
.levels {
  height: 211px;
  padding: 1px 4px 4px 3px;
  display: flex;
  flex-direction: column;
}
.levels-tools,
.tools {
  display: flex;
  align-items: center;
}
.levels-tools {
  height: 27px;
}
.levels-tools button {
  width: 25px;
}
.levels-tools svg,
.tools svg {
  width: 18px;
  height: 18px;
}
.grow {
  flex: 1;
}
.tsep {
  width: 1px;
  height: 20px;
  margin: 0 4px;
  background: #a8a8a8;
}
.table-box {
  flex: 1;
  border: 1px solid #8b8f98;
  background: #fff;
  padding: 1px;
}
table {
  width: 100%;
  table-layout: fixed;
  border-collapse: collapse;
}
th {
  height: 27px;
  padding: 0 6px;
  text-align: left;
  font-weight: 400;
  background: #dfdfdf;
  border-right: 1px solid #c6c6c6;
}
th:last-child {
  border-right: 0;
}
td {
  height: 19px;
  padding: 0 6px;
  border-bottom: 1px solid #e2e2e2;
}
.r { text-align: right; }
.c { text-align: center; }
.c34 { width: 34px; }
.c52 { width: 52px; }
.c54 { width: 54px; }
.c81 { width: 81px; }
.c106 { width: 106px; }
.c119 { width: 119px; }
.c120 { width: 120px; }
.c139 { width: 139px; }
.c167 { width: 167px; }
.levels-table td {
  height: 20px;
}
.levels-table .dim {
  background: #dcdcdc;
  color: #444;
}
.levels-table .sel td {
  background: #c8dce8;
}
.levels-table th.r {
  padding: 0 6px 0 0;
}
.levels-table th.c,
.levels-table td.c {
  padding: 0;
}
.levels-table .chk {
  display: block;
  margin: 0 auto;
}
.chk {
  position: relative;
  display: inline-block;
  width: 12px;
  height: 12px;
}
.chk input {
  appearance: none;
  display: block;
  width: 12px;
  height: 12px;
  margin: 0;
  border: 1px solid #555;
  background: #fff;
}
.chk svg {
  position: absolute;
  inset: 0;
  fill: none;
  stroke: #111;
}

.view3d {
  flex: 1;
  display: flex;
  padding: 4px;
}
.side {
  width: 23px;
  display: flex;
  flex-direction: column;
}
.side button {
  height: 23px;
}
.side button svg,
.scene-tools svg {
  width: 17px;
  height: 17px;
}
.vscroll,
.pscroll-v {
  flex: 1;
  display: flex;
  flex-direction: column;
  align-items: center;
  padding: 4px 0;
  background: #f1f1f1;
}
.vscroll svg,
.pscroll-v svg,
.pscroll-h svg,
.area svg,
.sel-wrap svg {
  width: 10px;
  height: 10px;
  fill: none;
  stroke: #555;
  stroke-width: 2;
}
.vscroll .thumb {
  width: 100%;
  height: 17px;
  margin: 109px 0 auto;
  background: #cdcdcd;
}
.scene-col {
  flex: 1;
  display: flex;
  flex-direction: column;
}
.scene-tools {
  display: flex;
  justify-content: space-between;
  height: 23px;
  padding-right: 168px;
  background: linear-gradient(90deg, #ebebeb 24px, #f4f4f4 24px);
}
.scene-tools button {
  width: 24px;
}
.hthumb {
  width: 60px;
  background: #cdcdcd;
}
.scene {
  flex: 1;
  width: 100%;
  background: #c0c0c0;
}
.ax {
  font: 700 7px 'Open Sans', sans-serif;
}

.plan {
  display: grid;
  grid-template-columns: 1fr 16px;
  grid-template-rows: 1fr 16px;
  background: #f1f1f1;
}
.plan-main {
  position: relative;
  background: #fff;
}
.plan-lines {
  position: absolute;
  inset: 0;
  width: 100%;
  height: 100%;
}
.tag {
  font: 5px 'Open Sans', sans-serif;
  fill: #7b6f7a;
  stroke: none;
}
.warn {
  position: absolute;
  right: 0;
  bottom: 1px;
  width: 31px;
  height: 31px;
}
.pscroll-v .thumb {
  width: 100%;
  height: 159px;
  margin: 227px 0 auto;
  background: #cdcdcd;
}
.pscroll-h {
  grid-column: 1 / 3;
  display: flex;
  align-items: center;
  padding: 0 19px 0 4px;
}
.pscroll-h .thumb {
  width: 200px;
  height: 100%;
  margin: 0 auto 0 321px;
  background: #cdcdcd;
}

/* dialogs */
.dialog {
  position: absolute;
  display: flex;
  flex-direction: column;
  padding: 0 4px 4px;
  border: 1px solid #1661ae;
  background: #2f7ecf;
}
.dialog > header {
  flex: none;
  display: flex;
  height: 30px;
  padding-top: 2px;
  color: #fff;
}
.dialog h3 {
  flex: 1;
  text-align: center;
  font-weight: 700;
  line-height: 30px;
}
.dialog > header button {
  width: 48px;
}
.dialog > footer {
  flex: none;
  display: flex;
  justify-content: space-between;
  height: 39px;
  padding: 7px 6px;
  border-top: 1px solid #c9c9c9;
  background: #dedede;
}
.dialog > footer button {
  width: 64px;
  height: 25px;
  border: 1px solid #b3b3b3;
  background: #e2e2e2;
}
.dialog > footer .ok {
  width: 79px;
  border: 2px solid #0b7ad6;
}
.d-options {
  left: 68px;
  top: 236px;
  width: 287px;
  height: 347px;
}
.d-points {
  left: 397px;
  top: 228px;
  width: 537px;
  height: 376px;
}
.d-piece {
  left: 940px;
  top: 194px;
  width: 550px;
  height: 555px;
  border-color: #0a3f86;
  background: #185fab;
}
.opt-body {
  flex: 1;
  display: flex;
  padding: 6px 0 6px 7px;
  background: #ebebeb;
}
.opt-list {
  width: 225px;
}
.opt {
  height: 87px;
  border: 1px solid #808080;
  background: #fafafa;
}
.opt h4,
.group h4 {
  height: 21px;
  padding-left: 6px;
  line-height: 20px;
  background: #cfcfcf;
  border-bottom: 1px solid #808080;
}
.opt > button {
  height: 63px;
  gap: 5px;
  padding-left: 10px;
}
.opt > button svg {
  width: 44px;
  height: 44px;
}
.opt-pair {
  display: flex;
  gap: 6px;
  height: 63px;
  padding-left: 9px;
}
.opt-pair svg {
  width: 46px;
  height: 46px;
}
.opt-side {
  flex: 1;
  display: flex;
  flex-direction: column;
  align-items: center;
  margin-left: 6px;
  border-left: 1px solid #999;
}
.opt-side button {
  height: 32px;
}
.opt-side svg {
  width: 18px;
  height: 18px;
}
.opt-side i {
  width: 27px;
  height: 1px;
  background: #b5b5b5;
}
.pad {
  flex: 1;
  display: flex;
  padding: 7px 6px;
  background: #ebebeb;
}
.pad + footer {
  height: 38px;
}
.frame {
  flex: 1;
  display: flex;
  flex-direction: column;
  padding: 6px;
  border: 1px solid #808080;
  background: #fafafa;
}
.tools button {
  width: 23px;
  height: 22px;
}
.d-points .tools .tsep {
  margin: 0 2px;
}
.rooms-table td {
  border-right: 1px solid #e2e2e2;
}
.rooms-table .sel td {
  background: #efefef;
}
.rooms-table .sel td:first-child {
  background: #bfbfbf;
}
.field {
  display: flex;
  justify-content: space-between;
  padding: 0 3px;
}
.f-ref {
  padding-top: 3px;
}
.f-ref label {
  line-height: 23px;
}
.f-ref input {
  width: 254px;
  height: 23px;
  padding: 0 5px;
  border: 1px solid #0b7ad6;
  outline: 0;
  background: #fff;
  font: inherit;
}
.f-ref input::selection {
  background: #0078d7;
  color: #fff;
}
.f-desc {
  padding-top: 11px;
}
.area {
  display: flex;
  width: 258px;
  height: 61px;
  border: 1px solid #7d7d7d;
  background: #fff;
  padding: 1px;
}
.area textarea {
  flex: 1;
  min-width: 0;
  border: 0;
  padding: 4px;
  resize: none;
  font: inherit;
  outline: 0;
}
.area span {
  display: flex;
  flex-direction: column;
  justify-content: space-between;
  width: 16px;
  padding: 5px 3px;
  background: #f1f1f1;
}
.area svg,
.sel-wrap svg {
  stroke-width: 1.4;
  stroke: #888;
}
.sel .sel-wrap svg {
  stroke: #3c6f96;
}
.f-color {
  height: 46px;
  padding-top: 12px;
}
.chk-row {
  display: flex;
  gap: 4px;
  align-items: center;
  height: 16px;
}
.color {
  display: flex;
  align-items: center;
  gap: 6px;
  height: 25px;
  padding-right: 2px;
}
.color button {
  width: 25px;
  height: 25px;
  background: #800080;
}
.group {
  flex: 1;
  display: flex;
  flex-direction: column;
  border: 1px solid #808080;
}
.group .tools {
  height: 28px;
  padding: 6px 0 0 6px;
}
.group .table-box {
  margin: 0 6px 5px;
}
.rules-table th {
  height: 28px;
}
.rules-table td {
  border-right: 1px solid #e2e2e2;
}
.rules-table td:nth-child(-n + 3) {
  padding: 0;
  border-right-color: transparent;
}
.rules-table .sel td {
  background: #c8dce8;
}
.rules-table .sel td:first-child {
  background: #4a9ee0;
  color: #fff;
}
.rules-table .sel .val {
  background: #e6eef4;
}
.rules-table .off {
  background: #dadada;
}
.sel-wrap {
  position: relative;
}
.sel-wrap select {
  appearance: none;
  display: block;
  width: 100%;
  height: 18px;
  padding: 0 6px;
  border: 0;
  background: none;
  font: inherit;
  color: inherit;
}
.sel-wrap svg {
  position: absolute;
  right: 5px;
  top: 4px;
  pointer-events: none;
}
.callouts {
  position: absolute;
  left: -1px;
  top: -1px;
  width: 100%;
  height: 100%;
  pointer-events: none;
}
</style>
